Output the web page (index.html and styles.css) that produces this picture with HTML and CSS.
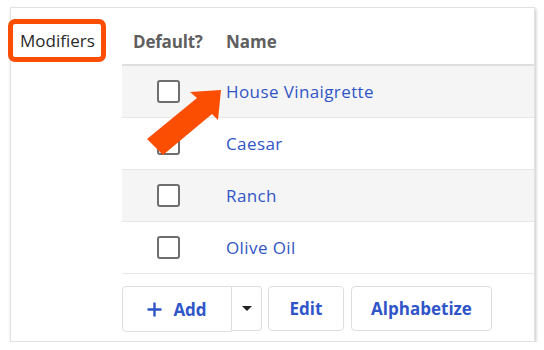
FILE: index.html
```html
<!DOCTYPE html>
<html lang="en">
<head>
  <meta charset="UTF-8">
  <meta name="viewport" content="width=device-width, initial-scale=1.0">
  <title>Modifiers</title>
  <link rel="stylesheet" href="styles.css">
</head>
<body>

<div class="page">
  <div class="card">
    <div class="side">
      <span class="label">Modifiers</span>
    </div>

    <div class="main">
      <div class="row head">
        <div class="col-default">Default?</div>
        <div class="col-name">Name</div>
      </div>
      <div class="row alt">
        <div class="col-default"><span class="check"></span></div>
        <div class="col-name"><a href="#">House Vinaigrette</a></div>
      </div>
      <div class="row">
        <div class="col-default"><span class="check"></span></div>
        <div class="col-name"><a href="#">Caesar</a></div>
      </div>
      <div class="row alt">
        <div class="col-default"><span class="check"></span></div>
        <div class="col-name"><a href="#">Ranch</a></div>
      </div>
      <div class="row">
        <div class="col-default"><span class="check"></span></div>
        <div class="col-name"><a href="#">Olive Oil</a></div>
      </div>

      <div class="actions">
        <div class="split">
          <button class="btn btn-add">
            <svg width="15" height="15" viewBox="0 0 15 15"><path d="M7.5 0.5v14M0.5 7.5h14" stroke="currentColor" stroke-width="2.4" fill="none"/></svg>
            Add
          </button>
          <button class="btn btn-caret"><span class="caret"></span></button>
        </div>
        <button class="btn btn-edit">Edit</button>
        <button class="btn btn-alpha">Alphabetize</button>
      </div>
    </div>
  </div>
</div>

<!-- annotation arrow -->
<svg class="arrow" width="544" height="350" viewBox="0 0 544 350">
  <polygon points="147,139 197,98 190,92 221,90 218,120 212,114 163,155" fill="#fc4e03"/>
</svg>

</body>
</html>
```

FILE: styles.css
```css
body {
  margin: 0;
  background: #ffffff;
  font-family: "Open Sans", "Liberation Sans", sans-serif;
  color: #222222;
}
.page {
  padding: 7px 9px 0 10px;
}
.card {
  display: flex;
  border: 1px solid #e2e2e2;
  box-shadow: 1px 2px 3px rgba(0, 0, 0, 0.22);
  padding-bottom: 9px;
}
.side {
  width: 110px;
  padding: 15px 0 0 1px;
}
.label {
  display: inline-block;
  font-size: 17px;
  line-height: 24px;
  padding: 6px 7px 5px 8px;
  outline: 5px solid #fc4e03;
  outline-offset: -1px;
  border-radius: 3px;
  color: #2a2a2a;
}
.main {
  flex: 1;
  display: flex;
  flex-direction: column;
}
.row {
  display: flex;
  align-items: center;
  height: 51px;
  border-bottom: 1px solid #e6e6e6;
  font-size: 17px;
}
.row.alt {
  background: #f5f5f5;
}
.row.head {
  height: auto;
  align-items: flex-start;
  padding: 22px 0 10px;
  line-height: 24px;
  font-weight: 700;
  color: #5f5f5f;
  border-bottom: 2px solid #dedede;
}
.col-default {
  box-sizing: border-box;
  width: 91px;
  display: flex;
  justify-content: center;
}
.row.head .col-default {
  justify-content: flex-start;
  padding-left: 11px;
  letter-spacing: -0.2px;
}
.col-name {
  padding-left: 13px;
}
.col-name a {
  color: #3155c6;
  text-decoration: none;
  letter-spacing: 0.4px;
}
.check {
  box-sizing: border-box;
  width: 23px;
  height: 23px;
  margin-left: 2px;
  border: 2px solid #6e6e6e;
  border-radius: 3px;
  background: #ffffff;
}
.actions {
  display: flex;
  gap: 6px;
  margin-top: 12px;
}
.split {
  display: flex;
}
.btn {
  box-sizing: border-box;
  height: 45px;
  background: #ffffff;
  border: 1px solid #dedede;
  border-radius: 4px;
  font-family: inherit;
  font-size: 17px;
  font-weight: 700;
  color: #2f55c8;
  display: flex;
  align-items: center;
  justify-content: center;
  padding: 0;
}
.btn-add {
  width: 110px;
  gap: 11px;
  border-radius: 4px 0 0 4px;
  height: 46px;
}
.btn-caret {
  width: 30px;
  border-left: none;
  border-radius: 0 4px 4px 0;
}
.caret {
  width: 0;
  height: 0;
  border-left: 5px solid transparent;
  border-right: 5px solid transparent;
  border-top: 5px solid #222222;
}
.btn-edit {
  width: 76px;
}
.btn-alpha {
  width: 141px;
  margin-left: 1px;
}
.arrow {
  position: absolute;
  left: 0;
  top: 0;
  pointer-events: none;
}
```
